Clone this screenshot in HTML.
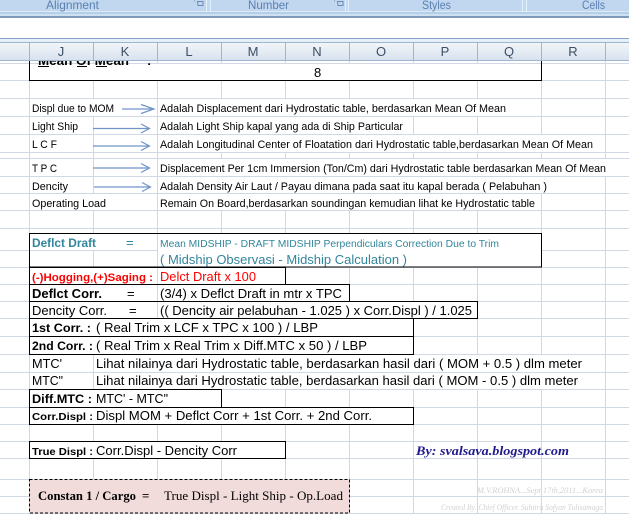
<!DOCTYPE html>
<html><head><meta charset="utf-8"><style>
html,body{margin:0;padding:0;background:#fff}
svg{display:block}
text{font-family:"Liberation Sans",Arial,sans-serif;font-size:11px;fill:#000;white-space:pre}
</style></head><body>
<svg width="629" height="514" viewBox="0 0 629 514" xmlns="http://www.w3.org/2000/svg">
<defs><linearGradient id="h" x1="0" y1="0" x2="0" y2="1"><stop offset="0" stop-color="#f2f5f9"/><stop offset="1" stop-color="#d8e2ee"/></linearGradient></defs>
<rect width="629" height="514" fill="#fff"/>
<!-- ribbon -->
<rect width="629" height="18" fill="#bfdbf2"/>
<g fill="#c1d7ef">
<rect x="0" y="0" width="206" height="11"/>
<rect x="211" y="0" width="134" height="11"/>
<rect x="349" y="0" width="173" height="11"/>
<rect x="527" y="0" width="102" height="11"/>
</g>
<rect x="0" y="11" width="629" height="1" fill="#dfeaf6"/>
<rect x="0" y="12" width="629" height="2" fill="#b4cfe8"/>
<rect x="0" y="14" width="629" height="2" fill="#cfe0f1"/>
<rect x="0" y="16" width="629" height="2" fill="#7f9ab8"/>
<g fill="#e6f0fa"><rect x="206" y="0" width="1" height="12"/><rect x="210" y="0" width="1" height="12"/><rect x="345" y="0" width="1" height="12"/><rect x="348" y="0" width="1" height="12"/><rect x="522" y="0" width="1" height="12"/><rect x="526" y="0" width="1" height="12"/></g>
<g fill="none" stroke="#6d8bb0"><path d="M194.500 .5v1M197.500 1.500h5.500v4h-5z"/><path d="M334.500 .5v1M337.500 1.500h5.500v4h-5z"/></g>
<text x="46" y="9" style="fill:#5b7fb0;font-size:12px" textLength="53" lengthAdjust="spacingAndGlyphs">Alignment</text>
<text x="248" y="9" style="fill:#5b7fb0;font-size:12px" textLength="41" lengthAdjust="spacingAndGlyphs">Number</text>
<text x="422" y="9" style="fill:#5b7fb0;font-size:12px" textLength="29" lengthAdjust="spacingAndGlyphs">Styles</text>
<text x="582" y="9" style="fill:#5b7fb0;font-size:12px" textLength="23" lengthAdjust="spacingAndGlyphs">Cells</text>
<!-- formula bar lines -->
<rect x="0" y="38" width="629" height="1" fill="#86a6c9"/>
<rect x="0" y="39" width="629" height="3" fill="#e6eef6"/>
<rect x="0" y="42" width="629" height="1" fill="#9db6d0"/>
<!-- grid -->
<g stroke="#d0d7e5" stroke-width="1" fill="none">
<path d="M0 63.500H629M0 80.500H629M0 98.500H629M0 116.500H629M0 134.500H629M0 152.500H629M0 158.500H629M0 176.500H629M0 193.500H629M0 210.500H629M0 228.500H629M0 250.500H629M0 267.500H629M0 284.500H629M0 301.500H629M0 318.500H629M0 336.500H629M0 354.500H629M0 372.500H629M0 389.500H629M0 407.500H629M0 424.500H629M0 441.500H629M0 458.500H629M0 479.500H629M0 496.500H629M0 513.500H629"/>
<path d="M29.500 60V514M93.500 60V514M157.500 60V514M221.500 60V514M285.500 60V514M349.500 60V514M413.500 60V514M477.500 60V514M541.500 60V514M605.500 60V514"/>
</g>
<!-- cover grid where long text overflows -->
<g fill="#fff">
<rect x="30" y="64" width="511" height="16"/>
<rect x="30" y="99" width="84" height="17"/>
<rect x="30" y="194" width="76" height="16"/>
<rect x="158" y="99" width="348" height="17"/>
<rect x="158" y="117" width="246" height="17"/>
<rect x="158" y="135" width="436" height="17"/>
<rect x="158" y="159" width="448" height="17"/>
<rect x="158" y="177" width="390" height="16"/>
<rect x="158" y="194" width="378" height="16"/>
<rect x="30" y="234" width="511" height="33"/>
<rect x="30" y="268" width="255" height="16"/>
<rect x="30" y="285" width="319" height="16"/>
<rect x="30" y="302" width="447" height="16"/>
<rect x="30" y="319" width="383" height="35"/>
<rect x="94" y="355" width="491" height="17"/>
<rect x="94" y="373" width="491" height="16"/>
<rect x="30" y="390" width="191" height="17"/>
<rect x="30" y="408" width="383" height="16"/>
<rect x="30" y="442" width="255" height="16"/>
</g>
<!-- header -->
<rect x="0" y="43" width="629" height="17" fill="url(#h)"/>
<rect x="0" y="60" width="629" height="1" fill="#9eb6ce"/>
<path d="M29.500 43V60M93.500 43V60M157.500 43V60M221.500 43V60M285.500 43V60M349.500 43V60M413.500 43V60M477.500 43V60M541.500 43V60M605.500 43V60" stroke="#9eb6ce" fill="none"/>
<g text-anchor="middle">
<text x="61" y="56" style="fill:#3f4f63;font-size:13px">J</text>
<text x="125" y="56" style="fill:#3f4f63;font-size:13px">K</text>
<text x="189" y="56" style="fill:#3f4f63;font-size:13px">L</text>
<text x="253" y="56" style="fill:#3f4f63;font-size:13px">M</text>
<text x="317" y="56" style="fill:#3f4f63;font-size:13px">N</text>
<text x="381" y="56" style="fill:#3f4f63;font-size:13px">O</text>
<text x="445" y="56" style="fill:#3f4f63;font-size:13px">P</text>
<text x="509" y="56" style="fill:#3f4f63;font-size:13px">Q</text>
<text x="573" y="56" style="fill:#3f4f63;font-size:13px">R</text>
</g>
<!-- Mean of mean clipped -->
<svg x="0" y="61" width="629" height="30" viewBox="0 61 629 30" overflow="hidden">
<text x="38" y="65" style="font-size:13px;font-weight:bold" textLength="91" lengthAdjust="spacingAndGlyphs">Mean Of Mean</text>
<text x="147" y="65" style="font-size:13px;font-weight:bold">:</text>
<path d="M38 66.500h11M77 66.500h10M96 66.500h11" stroke="#000"/>
<text x="314" y="77" style="font-size:13px">8</text>
</svg>
<!-- inner grid of Deflct Draft -->
<path d="M93.500 251V267M157.500 234V284M157.500 285V318M30 250.500H157" stroke="#d0d7e5" fill="none"/>
<!-- black boxes -->
<g fill="none" stroke="#000" stroke-width="1">
<path d="M29.500 61V80.500H541.500V61"/>
<rect x="29.500" y="233.500" width="512" height="33.500"/>
<rect x="29.500" y="267.500" width="256" height="17"/>
<rect x="29.500" y="284.500" width="320" height="17"/>
<rect x="29.500" y="301.500" width="448" height="17"/>
<rect x="29.500" y="318.500" width="384" height="18"/>
<rect x="29.500" y="336.500" width="384" height="18"/>
<rect x="29.500" y="389.500" width="192" height="18"/>
<rect x="29.500" y="407.500" width="384" height="17"/>
<rect x="29.500" y="441.500" width="256" height="17"/>
</g>
<!-- arrows -->
<g fill="none" stroke="#6f95c6" stroke-width="1.200">
<path d="M122 109H154M141 104.500L154 109L141 113.500"/>
<path d="M93 128.500H149M141 124L149.500 128.500L141 133"/>
<path d="M93 146H149M141 141.500L149.500 146L141 150.500"/>
<path d="M93 168H149M141 163.500L149.500 168L141 172.500"/>
<path d="M94 187H150M142 182.500L150.500 187L142 191.500"/>
</g>
<!-- list -->
<text x="32" y="112" textLength="82" lengthAdjust="spacingAndGlyphs">Displ due to MOM</text>
<text x="160" y="112" textLength="346" lengthAdjust="spacingAndGlyphs">Adalah Displacement dari Hydrostatic table, berdasarkan Mean Of Mean</text>
<text x="32" y="130" textLength="46" lengthAdjust="spacingAndGlyphs">Light Ship</text>
<text x="160" y="130" textLength="243" lengthAdjust="spacingAndGlyphs">Adalah Light Ship kapal yang ada di Ship Particular</text>
<text x="32" y="148" textLength="25" lengthAdjust="spacingAndGlyphs">L C F</text>
<text x="160" y="148" textLength="433" lengthAdjust="spacingAndGlyphs">Adalah Longitudinal Center of Floatation dari Hydrostatic table,berdasarkan Mean Of Mean</text>
<text x="32" y="172" textLength="25" lengthAdjust="spacingAndGlyphs">T P C</text>
<text x="160" y="172" textLength="446" lengthAdjust="spacingAndGlyphs">Displacement Per 1cm Immersion (Ton/Cm) dari Hydrostatic table berdasarkan Mean Of Mean</text>
<text x="32" y="190" textLength="36" lengthAdjust="spacingAndGlyphs">Dencity</text>
<text x="160" y="190" textLength="387" lengthAdjust="spacingAndGlyphs">Adalah Density Air Laut / Payau dimana pada saat itu kapal berada ( Pelabuhan )</text>
<text x="32" y="207" textLength="74" lengthAdjust="spacingAndGlyphs">Operating Load</text>
<text x="160" y="207" textLength="375" lengthAdjust="spacingAndGlyphs">Remain On Board,berdasarkan soundingan kemudian lihat ke Hydrostatic table</text>
<!-- calc -->
<text x="32" y="247" style="fill:#31859c;font-weight:bold;font-size:12px" textLength="64" lengthAdjust="spacingAndGlyphs">Deflct Draft</text>
<text x="126" y="247" style="fill:#31859c;font-size:13px">=</text>
<text x="160" y="247" style="fill:#31859c;font-size:10px" textLength="339" lengthAdjust="spacingAndGlyphs">Mean MIDSHIP - DRAFT MIDSHIP Perpendiculars Correction Due to Trim</text>
<text x="160" y="264" style="fill:#31859c;font-size:13px" textLength="247" lengthAdjust="spacingAndGlyphs">( Midship Observasi - Midship Calculation )</text>
<text x="32" y="281" style="fill:#f00;font-weight:bold;font-size:11px" textLength="121" lengthAdjust="spacingAndGlyphs">(-)Hogging,(+)Saging :</text>
<text x="160" y="281" style="fill:#f00;font-size:13px" textLength="96" lengthAdjust="spacingAndGlyphs">Delct Draft x 100</text>
<text x="32" y="298" style="font-size:13px;font-weight:bold" textLength="70" lengthAdjust="spacingAndGlyphs">Deflct Corr.</text>
<text x="127" y="298" style="font-size:13px">=</text>
<text x="160" y="298" style="font-size:13px" textLength="182" lengthAdjust="spacingAndGlyphs">(3/4) x Deflct Draft in mtr x TPC</text>
<text x="32" y="315" style="font-size:13px" textLength="75" lengthAdjust="spacingAndGlyphs">Dencity Corr.</text>
<text x="129" y="315" style="font-size:13px">=</text>
<text x="160" y="315" style="font-size:13px" textLength="312" lengthAdjust="spacingAndGlyphs">(( Dencity air pelabuhan - 1.025 ) x Corr.Displ ) / 1.025</text>
<text x="32" y="332" style="font-size:12px;font-weight:bold" textLength="59" lengthAdjust="spacingAndGlyphs">1st Corr. :</text>
<text x="96" y="332" style="font-size:13px" textLength="222" lengthAdjust="spacingAndGlyphs">( Real Trim x LCF x TPC x 100 ) / LBP</text>
<text x="32" y="350" style="font-size:12px;font-weight:bold" textLength="61" lengthAdjust="spacingAndGlyphs">2nd Corr. :</text>
<text x="96" y="350" style="font-size:13px" textLength="271" lengthAdjust="spacingAndGlyphs">( Real Trim x Real Trim x Diff.MTC x 50 ) / LBP</text>
<text x="32" y="368" style="font-size:13px" textLength="30" lengthAdjust="spacingAndGlyphs">MTC'</text>
<text x="96" y="368" style="font-size:13px" textLength="486" lengthAdjust="spacingAndGlyphs">Lihat nilainya dari Hydrostatic table, berdasarkan hasil dari ( MOM + 0.5 ) dlm meter</text>
<text x="32" y="385" style="font-size:13px" textLength="31" lengthAdjust="spacingAndGlyphs">MTC"</text>
<text x="96" y="385" style="font-size:13px" textLength="482" lengthAdjust="spacingAndGlyphs">Lihat nilainya dari Hydrostatic table, berdasarkan hasil dari ( MOM - 0.5 ) dlm meter</text>
<text x="32" y="403" style="font-size:12px;font-weight:bold" textLength="60" lengthAdjust="spacingAndGlyphs">Diff.MTC :</text>
<text x="96" y="403" style="font-size:13px" textLength="72" lengthAdjust="spacingAndGlyphs">MTC' - MTC"</text>
<text x="32" y="420" style="font-size:10px;font-weight:bold" textLength="61" lengthAdjust="spacingAndGlyphs">Corr.Displ :</text>
<text x="96" y="420" style="font-size:13px" textLength="276" lengthAdjust="spacingAndGlyphs">Displ MOM + Deflct Corr + 1st Corr. + 2nd Corr.</text>
<text x="32" y="455" style="font-size:10px;font-weight:bold" textLength="61" lengthAdjust="spacingAndGlyphs">True Displ :</text>
<text x="96" y="455" style="font-size:13px" textLength="141" lengthAdjust="spacingAndGlyphs">Corr.Displ - Dencity Corr</text>
<text x="416" y="455" style="font-family:'Liberation Serif',serif;font-size:13px;font-weight:bold;font-style:italic;fill:#1f1a8c" textLength="153" lengthAdjust="spacingAndGlyphs">By: svalsava.blogspot.com</text>
<!-- constan -->
<rect x="29.500" y="479.500" width="320" height="33.500" fill="#f2dcdb" stroke="#000" stroke-dasharray="3 2"/>
<text x="38" y="500" style="font-family:'Liberation Serif',serif;font-size:13px;font-weight:bold" textLength="98" lengthAdjust="spacingAndGlyphs">Constan 1 / Cargo</text>
<text x="142" y="500" style="font-family:'Liberation Serif',serif;font-size:13px;font-weight:bold">=</text>
<text x="164" y="500" style="font-family:'Liberation Serif',serif;font-size:13px" textLength="179" lengthAdjust="spacingAndGlyphs">True Displ - Light Ship - Op.Load</text>
<!-- watermarks -->
<text x="477" y="493" style="font-family:'Liberation Serif',serif;font-size:8px;font-style:italic;fill:#d2d2d2" textLength="126" lengthAdjust="spacingAndGlyphs">M.V.ROHNA...Sept 17th,2011...Korea</text>
<text x="441" y="510" style="font-family:'Liberation Serif',serif;font-size:8px;font-style:italic;fill:#d2d2d2" textLength="162" lengthAdjust="spacingAndGlyphs">Created By..Chief Officer. Suhitra Sofyan Tulisamaga</text>
</svg>
</body></html>
